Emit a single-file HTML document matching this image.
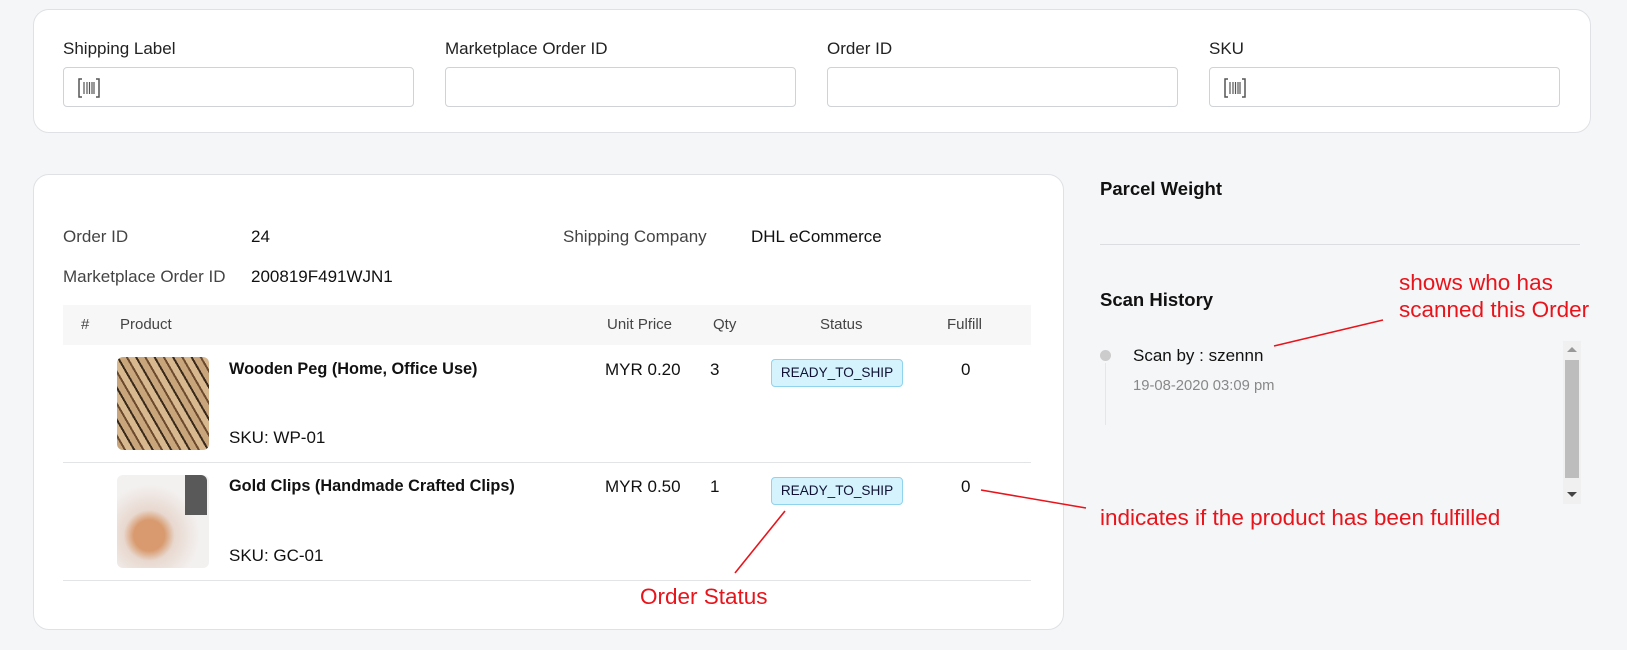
<!DOCTYPE html>
<html><head><style>
*{box-sizing:border-box;margin:0;padding:0}
body{width:1627px;height:650px;background:#f5f6f8;font-family:"Liberation Sans",Arial,sans-serif;color:#111;position:relative;overflow:hidden;font-size:17px}
.a{position:absolute;white-space:nowrap}
.card{position:absolute;background:#fff;border:1px solid #dfe1e5;border-radius:16px}
.inp{position:absolute;top:67px;height:40px;border:1px solid #cfd2d6;border-radius:4px;background:#fff}
.lbl{top:39px;font-size:17px;color:#222}
.th{top:316px;font-size:15px;color:#444}
.badge{position:absolute;width:132px;height:28px;background:#d4f3fd;border:1px solid #8fd3ee;border-radius:4px;font-size:13.6px;text-align:center;line-height:26px;color:#113}
.red{color:#e8141b;font-size:22.5px}
.bc{position:absolute;left:14px;top:10px}
.t{font-size:17px}
</style></head><body>
<div class="card" style="left:33px;top:9px;width:1558px;height:124px"></div>
<div class="a lbl" style="left:63px">Shipping Label</div>
<div class="a lbl" style="left:445px">Marketplace Order ID</div>
<div class="a lbl" style="left:827px">Order ID</div>
<div class="a lbl" style="left:1209px">SKU</div>
<div class="inp" style="left:63px;width:351px"><svg class="bc" width="22" height="20" viewBox="0 0 22 20" fill="none" stroke="#555" stroke-width="1.5"><path d="M4 1H1V19H4M18 1H21V19H18"/><path d="M6 4V16M9 4V16M11.5 4V16M14 4V16M16 4V16" stroke-width="1.2"/></svg></div>
<div class="inp" style="left:445px;width:351px"></div>
<div class="inp" style="left:827px;width:351px"></div>
<div class="inp" style="left:1209px;width:351px"><svg class="bc" width="22" height="20" viewBox="0 0 22 20" fill="none" stroke="#555" stroke-width="1.5"><path d="M4 1H1V19H4M18 1H21V19H18"/><path d="M6 4V16M9 4V16M11.5 4V16M14 4V16M16 4V16" stroke-width="1.2"/></svg></div>

<div class="card" style="left:33px;top:174px;width:1031px;height:456px"></div>
<div class="a t" style="left:63px;top:227px;color:#444">Order ID</div>
<div class="a t" style="left:251px;top:227px">24</div>
<div class="a t" style="left:563px;top:227px;color:#444">Shipping Company</div>
<div class="a t" style="left:751px;top:227px">DHL eCommerce</div>
<div class="a t" style="left:63px;top:267px;color:#444">Marketplace Order ID</div>
<div class="a t" style="left:251px;top:267px">200819F491WJN1</div>
<div class="a" style="left:63px;top:305px;width:968px;height:40px;background:#f7f7f8"></div>
<div class="a th" style="left:81px">#</div>
<div class="a th" style="left:120px">Product</div>
<div class="a th" style="left:607px">Unit Price</div>
<div class="a th" style="left:713px">Qty</div>
<div class="a th" style="left:820px">Status</div>
<div class="a th" style="left:947px">Fulfill</div>

<div class="a" style="left:117px;top:357px;width:92px;height:93px;border-radius:6px;background:repeating-linear-gradient(60deg,#c9a57c 0 6px,#6b4a2e 6px 8px,#d8b88f 8px 14px,#3a2a1c 14px 16px)"></div>
<div class="a" style="left:229px;top:360px;font-weight:bold;font-size:16.3px">Wooden Peg (Home, Office Use)</div>
<div class="a t" style="left:229px;top:428px">SKU: WP-01</div>
<div class="a t" style="left:605px;top:360px">MYR 0.20</div>
<div class="a t" style="left:710px;top:360px">3</div>
<div class="badge" style="left:771px;top:359px">READY_TO_SHIP</div>
<div class="a t" style="left:961px;top:360px">0</div>
<div class="a" style="left:63px;top:462px;width:968px;height:1px;background:#e3e4e6"></div>

<div class="a" style="left:117px;top:475px;width:92px;height:93px;border-radius:6px;background:radial-gradient(circle at 35% 65%,#d89a6e 0 18%,#e8d8cf 30%,#f3f1f0 60%),#eee"></div>
<div class="a" style="left:185px;top:475px;width:22px;height:40px;background:#333;border-radius:0 6px 0 0;opacity:.8"></div>
<div class="a" style="left:229px;top:477px;font-weight:bold;font-size:16.3px">Gold Clips (Handmade Crafted Clips)</div>
<div class="a t" style="left:229px;top:546px">SKU: GC-01</div>
<div class="a t" style="left:605px;top:477px">MYR 0.50</div>
<div class="a t" style="left:710px;top:477px">1</div>
<div class="badge" style="left:771px;top:477px">READY_TO_SHIP</div>
<div class="a t" style="left:961px;top:477px">0</div>
<div class="a" style="left:63px;top:580px;width:968px;height:1px;background:#e3e4e6"></div>
<div class="a red" style="left:640px;top:584px">Order Status</div>

<div class="a" style="left:1100px;top:178px;font-weight:bold;font-size:18.5px">Parcel Weight</div>
<div class="a" style="left:1100px;top:244px;width:480px;height:1px;background:#dcdde0"></div>
<div class="a" style="left:1100px;top:289px;font-weight:bold;font-size:18.5px">Scan History</div>
<div class="a" style="left:1100px;top:350px;width:11px;height:11px;border-radius:50%;background:#ccc"></div>
<div class="a" style="left:1105px;top:363px;width:1px;height:62px;background:#e6e6e6"></div>
<div class="a t" style="left:1133px;top:346px">Scan by : szennn</div>
<div class="a" style="left:1133px;top:378px;font-size:14.8px;color:#888">19-08-2020 03:09 pm</div>
<div class="a" style="left:1563px;top:341px;width:18px;height:163px;background:#f0f0f0"></div>
<div class="a" style="left:1565px;top:360px;width:14px;height:118px;background:#bdbdbd"></div>
<div class="a" style="left:1567px;top:347px;width:0;height:0;border:5px solid transparent;border-bottom:5px solid #999;border-top:0"></div>
<div class="a" style="left:1567px;top:492px;width:0;height:0;border:5px solid transparent;border-top:5px solid #444;border-bottom:0"></div>

<div class="a red" style="left:1399px;top:270px">shows who has</div>
<div class="a red" style="left:1399px;top:297px">scanned this Order</div>
<div class="a red" style="left:1100px;top:505px">indicates if the product has been fulfilled</div>
<svg class="a" style="left:0;top:0" width="1627" height="650"><g stroke="#e8141b" stroke-width="1.6"><line x1="785" y1="511" x2="735" y2="573"/><line x1="981" y1="490" x2="1086" y2="508"/><line x1="1274" y1="346" x2="1383" y2="320"/></g></svg>
</body></html>
